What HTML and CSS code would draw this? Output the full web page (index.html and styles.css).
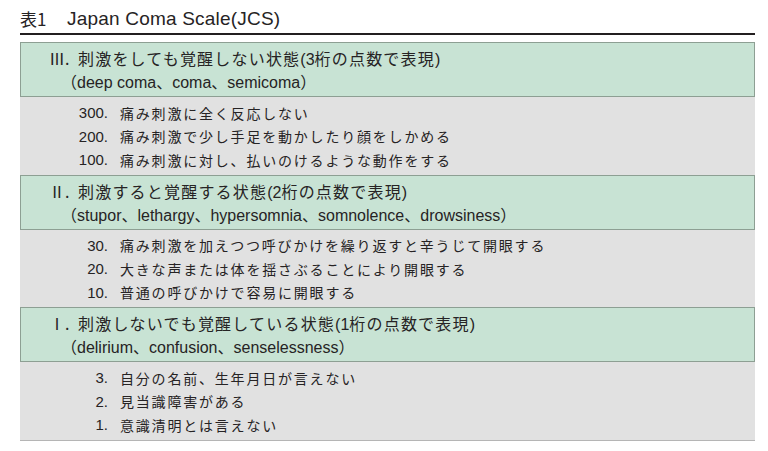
FILE: index.html
```html
<!DOCTYPE html>
<html lang="ja">
<head>
<meta charset="utf-8">
<title>Japan Coma Scale</title>
<link rel="stylesheet" href="styles.css">
</head>
<body>
<div class="page">
  <h1 class="title"><span class="cap">表1</span><span class="title-en">Japan Coma Scale(JCS)</span></h1>
  <div class="table">
    <section class="sec sec-3">
      <div class="head">
        <div class="head-main"><span class="roman">Ⅲ.</span>刺激をしても覚醒しない状態<span class="en">(3</span>桁の点数で表現<span class="en">)</span></div>
        <div class="head-sub">（deep coma、coma、semicoma）</div>
      </div>
      <ul class="items">
        <li><span class="num">300.</span><span class="txt">痛み刺激に全く反応しない</span></li>
        <li><span class="num">200.</span><span class="txt">痛み刺激で少し手足を動かしたり顔をしかめる</span></li>
        <li><span class="num">100.</span><span class="txt">痛み刺激に対し、払いのけるような動作をする</span></li>
      </ul>
    </section>
    <section class="sec sec-2">
      <div class="head">
        <div class="head-main"><span class="roman">Ⅱ.</span>刺激すると覚醒する状態<span class="en">(2</span>桁の点数で表現<span class="en">)</span></div>
        <div class="head-sub">（stupor、lethargy、hypersomnia、somnolence、drowsiness）</div>
      </div>
      <ul class="items">
        <li><span class="num">30.</span><span class="txt">痛み刺激を加えつつ呼びかけを繰り返すと辛うじて開眼する</span></li>
        <li><span class="num">20.</span><span class="txt">大きな声または体を揺さぶることにより開眼する</span></li>
        <li><span class="num">10.</span><span class="txt">普通の呼びかけで容易に開眼する</span></li>
      </ul>
    </section>
    <section class="sec sec-1">
      <div class="head">
        <div class="head-main"><span class="roman">Ⅰ.</span>刺激しないでも覚醒している状態<span class="en">(1</span>桁の点数で表現<span class="en">)</span></div>
        <div class="head-sub">（delirium、confusion、senselessness）</div>
      </div>
      <ul class="items">
        <li><span class="num">3.</span><span class="txt">自分の名前、生年月日が言えない</span></li>
        <li><span class="num">2.</span><span class="txt">見当識障害がある</span></li>
        <li><span class="num">1.</span><span class="txt">意識清明とは言えない</span></li>
      </ul>
    </section>
  </div>
</div>
</body>
</html>
```

FILE: styles.css
```css
html, body {
  margin: 0;
  padding: 0;
  background: #ffffff;
}

body {
  font-family: "Liberation Sans", "Noto Sans CJK JP", sans-serif;
  color: #262324;
}

.page {
  width: 735px;
  padding: 6px 0 0 20px;
}

.title {
  margin: 0;
  font-size: 17px;
  font-weight: normal;
  line-height: 26px;
  height: 26px;
  border-bottom: 2px solid #231f20;
  padding-bottom: 1px;
  display: flex;
  align-items: center;
}

.cap {
  font-family: "Noto Sans CJK JP", sans-serif;
  width: 47px;
}

.title-en {
  font-size: 19px;
  letter-spacing: 0.2px;
}

.table {
  margin-top: 7px;
  border-bottom: 1px solid #b5b5b5;
}

.head {
  background: #c8e3d4;
  border: 1px solid #8d9f93;
  padding: 3px 0 2px 0;
}

.head-main {
  font-family: "Noto Sans CJK JP", sans-serif;
  font-size: 16px;
  line-height: 24px;
  letter-spacing: 1.2px;
  padding-left: 28px;
}

.roman {
  display: inline-block;
  width: 29px;
  letter-spacing: 0;
}

.en {
  font-family: "Liberation Sans", sans-serif;
  letter-spacing: 0;
}

.head-sub {
  font-size: 16px;
  line-height: 22px;
  padding-left: 40px;
}

.items {
  list-style: none;
  margin: 0;
  padding: 4px 0 3px 0;
  background: #e1e1e1;
}

.items li {
  display: flex;
  align-items: center;
  height: 23.5px;
  font-size: 14px;
}

.num {
  width: 88px;
  text-align: right;
  padding-right: 12px;
  flex: none;
  font-size: 15px;
}

.txt {
  font-family: "Noto Sans CJK JP", sans-serif;
  letter-spacing: 1.8px;
}
```
